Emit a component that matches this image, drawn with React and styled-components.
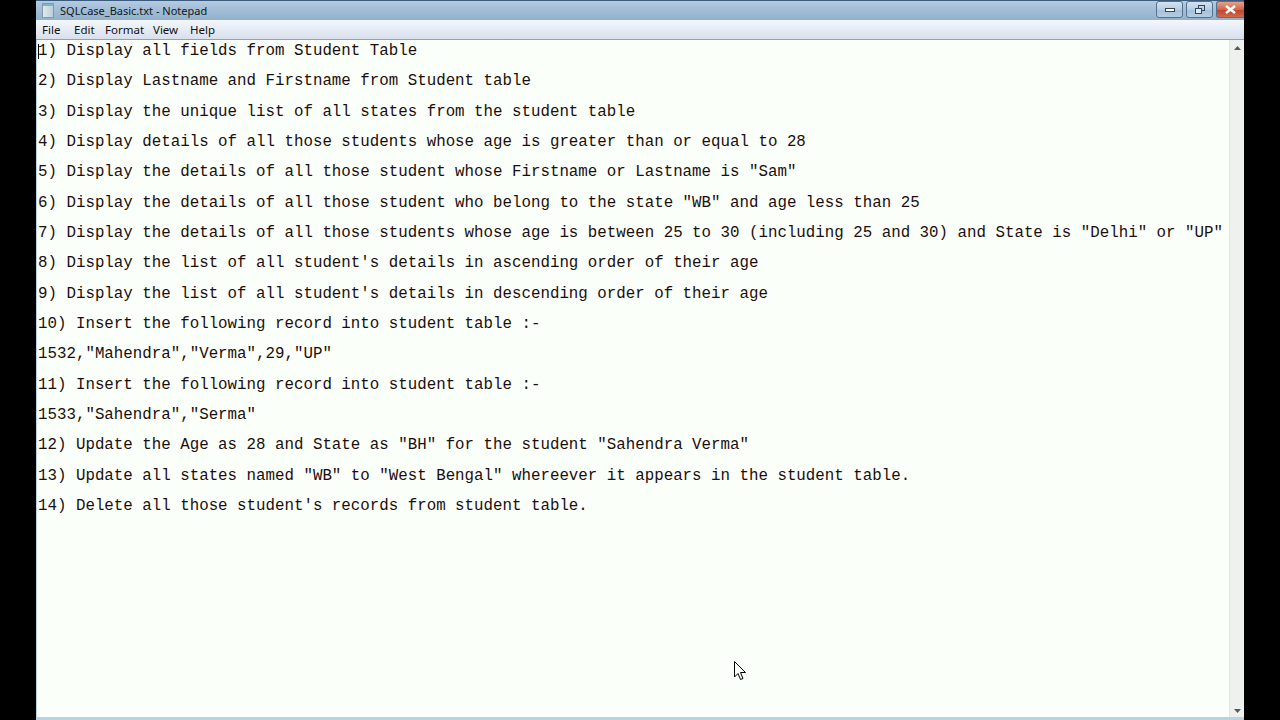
import styled, { createGlobalStyle } from 'styled-components'

const GlobalStyle = createGlobalStyle`
    html, body {
        margin: 0;
        padding: 0;
        background: #000;
        overflow: hidden;
    }
`

const Screen = styled.div`
    width: 1280px;
    height: 720px;
    background: #000;
    display: flex;
    position: relative;
    overflow: hidden;
`

const Window = styled.div`
    margin-left: 36px;
    width: 1208px;
    height: 720px;
    display: flex;
    flex-direction: column;
    background: #a9c3db;
`

const TitleBar = styled.div`
    height: 20px;
    flex-shrink: 0;
    display: flex;
    align-items: center;
    background: linear-gradient(#3b5b7c 0, #3b5b7c 1px, #b4cbe0 1px, #a2bdd6 10px, #93b1cc 20px);
    padding-left: 6px;
`

const AppIcon = styled.div`
    width: 10px;
    height: 13px;
    margin-right: 6px;
    background: linear-gradient(90deg, #dfe9ee, #b9d0d8);
    border: 1px solid #7f9aa8;
    box-shadow: inset 0 2px 0 #7fb3c9;
`

const Title = styled.div`
    font-family: "Noto Sans", "Open Sans", sans-serif;
    font-size: 11px;
    color: #101820;
    flex: 1;
`

const Controls = styled.div`
    display: flex;
    align-self: flex-start;
    gap: 3px;
    margin-top: 1px;
`

const CtrlButton = styled.div`
    width: ${p => (p.$close ? '28px' : '27px')};
    height: 17px;
    border: 1px solid #56708e;
    border-radius: 3px;
    box-sizing: border-box;
    display: flex;
    align-items: center;
    justify-content: center;
    background: ${p =>
        p.$close
            ? 'linear-gradient(#e7a08a, #d4644a 50%, #c1412a 51%, #d06a4c)'
            : 'linear-gradient(#d3e2ef, #b7cde0 50%, #a3bfd7 51%, #b6cde0)'};
    ${p => p.$close && 'border-right: none; border-radius: 3px 0 0 3px;'}
`

const MenuBar = styled.div`
    height: 19px;
    flex-shrink: 0;
    display: flex;
    align-items: center;
    padding-left: 6px;
    background: linear-gradient(#f3f7fb, #e6ecf4 50%, #d9dfeb);
    border-bottom: 1px solid #9a9fa6;
`

const MenuItem = styled.div`
    font-family: "Noto Sans", "Open Sans", sans-serif;
    font-size: 11.5px;
    color: #101010;
    width: ${p => p.$w}px;
`

const Body = styled.div`
    flex: 1;
    display: flex;
    background: #fbfff9;
    border-left: 1px solid #b9d3e3;
    border-bottom: 3px solid #b9d3e3;
`

const Editor = styled.pre`
    flex: 1;
    margin: 0;
    padding: 4px 0 0 1px;
    font-family: "Liberation Mono", "DejaVu Sans Mono", monospace;
    font-size: 15.8px;
    line-height: 15.17px;
    color: #1c0e0e;
    position: relative;
`

const Caret = styled.span`
    position: absolute;
    left: 1px;
    top: 4px;
    width: 1px;
    height: 15px;
    background: #000;
`

const ScrollBar = styled.div`
    width: 14px;
    display: flex;
    flex-direction: column;
    justify-content: space-between;
    align-items: center;
    background: #eef1ee;
    border-left: 1px solid #e2e6e2;
    padding: 6px 0 4px;
`

const Pointer = styled.svg`
    position: absolute;
    left: 734px;
    top: 661px;
`

const text = `1) Display all fields from Student Table

2) Display Lastname and Firstname from Student table

3) Display the unique list of all states from the student table

4) Display details of all those students whose age is greater than or equal to 28

5) Display the details of all those student whose Firstname or Lastname is "Sam"

6) Display the details of all those student who belong to the state "WB" and age less than 25

7) Display the details of all those students whose age is between 25 to 30 (including 25 and 30) and State is "Delhi" or "UP"

8) Display the list of all student's details in ascending order of their age

9) Display the list of all student's details in descending order of their age

10) Insert the following record into student table :-

1532,"Mahendra","Verma",29,"UP"

11) Insert the following record into student table :-

1533,"Sahendra","Serma"

12) Update the Age as 28 and State as "BH" for the student "Sahendra Verma"

13) Update all states named "WB" to "West Bengal" whereever it appears in the student table.

14) Delete all those student's records from student table.`

const menus = [
    ['File', 32],
    ['Edit', 31],
    ['Format', 48],
    ['View', 37],
    ['Help', 40],
]

const App = () => {
    return (
        <>
            <GlobalStyle />
            <Screen>
                <Window>
                    <TitleBar>
                        <AppIcon />
                        <Title>SQLCase_Basic.txt - Notepad</Title>
                        <Controls>
                            <CtrlButton>
                                <svg width="10" height="4">
                                    <rect x="0.5" y="0.5" width="9" height="3" fill="#fff" stroke="#33475c" />
                                </svg>
                            </CtrlButton>
                            <CtrlButton>
                                <svg width="10" height="9">
                                    <rect x="3.5" y="0.5" width="6" height="5" fill="none" stroke="#33475c" />
                                    <rect x="0.5" y="3.5" width="6" height="5" fill="#dde8f1" stroke="#33475c" />
                                </svg>
                            </CtrlButton>
                            <CtrlButton $close>
                                <svg width="11" height="9">
                                    <path d="M1 1 L10 8 M10 1 L1 8" stroke="#fff" strokeWidth="2.4" />
                                </svg>
                            </CtrlButton>
                        </Controls>
                    </TitleBar>
                    <MenuBar>
                        {menus.map(([m, w]) => (
                            <MenuItem key={m} $w={w}>{m}</MenuItem>
                        ))}
                    </MenuBar>
                    <Body>
                        <Editor>
                            <Caret />
                            {text}
                        </Editor>
                        <ScrollBar>
                            <svg width="7" height="4">
                                <path d="M3.5 0 L7 4 L0 4 Z" fill="#5a5a5a" />
                            </svg>
                            <svg width="7" height="4">
                                <path d="M0 0 L7 0 L3.5 4 Z" fill="#5a5a5a" />
                            </svg>
                        </ScrollBar>
                    </Body>
                </Window>
                <Pointer width="13" height="20" viewBox="0 0 13 20">
                    <path
                        d="M0.5 0.5 L0.5 16 L4 12.5 L6.5 18.5 L9 17.5 L6.5 11.5 L11.5 11.5 Z"
                        fill="#fff"
                        stroke="#000"
                        strokeWidth="1"
                        strokeLinejoin="miter"
                    />
                </Pointer>
            </Screen>
        </>
    )
}

export default App
